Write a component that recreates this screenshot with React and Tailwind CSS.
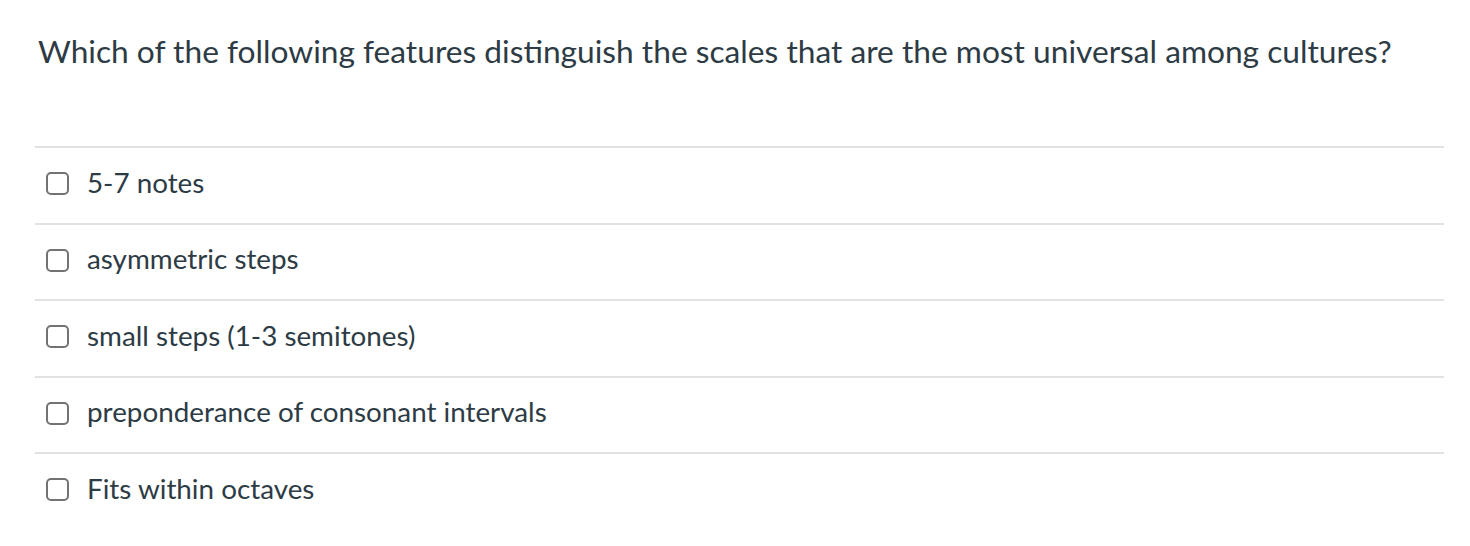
export default function App() {
  const options = [
    "5-7 notes",
    "asymmetric steps",
    "small steps (1-3 semitones)",
    "preponderance of consonant intervals",
    "Fits within octaves",
  ];
  return (
    <div
      className="w-[1470px] h-[546px] bg-white text-[#2d3b45] overflow-hidden"
      style={{ fontFamily: "Lato, 'Noto Sans', sans-serif" }}
    >
      <div className="pl-[35px] pr-[26px]">
        <div className="pt-[30px] pl-[3px] text-[31.7px] leading-[42px]">
          Which of the following features distinguish the scales that are the most universal among cultures?
        </div>
        <div className="mt-[74px]">
          {options.map((o, i) => (
            <div
              key={i}
              className="flex items-center h-[76.5px] pb-[5px] border-t-2 border-[#e2e2e2]"
            >
              <div className="ml-[11px] mt-[2px] w-[23px] h-[23px] rounded-[5px] border-2 border-[#737373]" />
              <span className="ml-[18px] text-[27.8px] leading-[36px]">{o}</span>
            </div>
          ))}
        </div>
      </div>
    </div>
  );
}
